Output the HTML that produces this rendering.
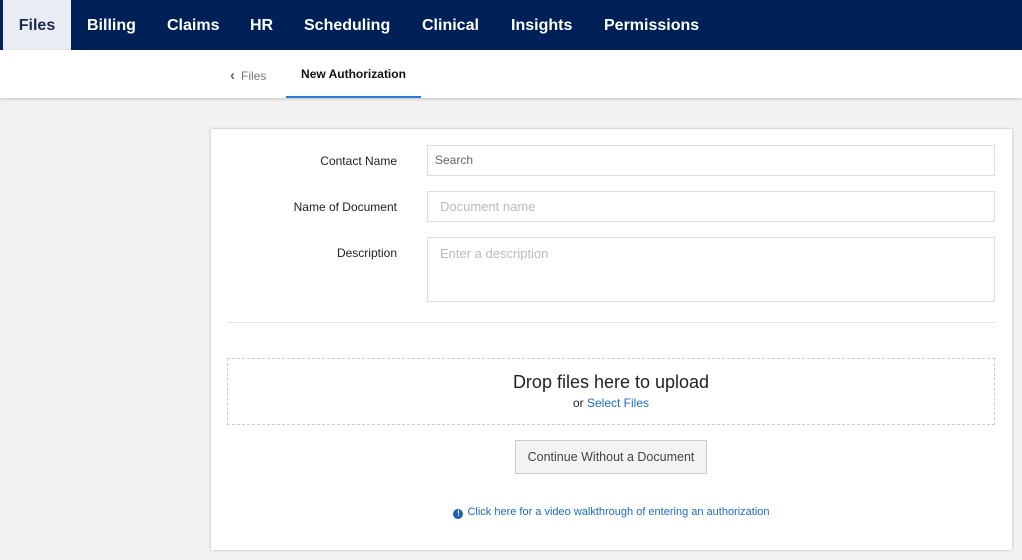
<!DOCTYPE html>
<html><head><style>
*{box-sizing:border-box;margin:0;padding:0}
body{width:1022px;height:560px;background:#f2f2f2;font-family:"Liberation Sans",Arial,sans-serif;position:relative;overflow:hidden}
.nav{position:absolute;left:0;top:0;width:1022px;height:50px;background:#002157}
.nav span{position:absolute;top:0;height:50px;line-height:51px;color:#fff;font-weight:bold;font-size:16px}
.nav .act{left:3px;width:68px;background:#e9ecf3;color:#1b2a4a;text-align:center}
.sub{position:absolute;left:0;top:50px;width:1022px;height:48px;background:#fff;box-shadow:0 1px 3px rgba(0,0,0,.2)}
.sub .back{position:absolute;left:230px;top:17px;font-size:12px;color:#777}
.sub .tab{position:absolute;left:286px;width:135px;top:0;height:48px;border-bottom:2px solid #2a7ad2;text-align:center;line-height:49px;font-size:12px;font-weight:bold;color:#111}
.card{position:absolute;left:211px;top:129px;width:801px;height:421px;background:#fff;box-shadow:0 0 3px rgba(0,0,0,.25)}
.lbl{position:absolute;right:615px;font-size:12px;color:#222;text-align:right;white-space:nowrap}
.in{position:absolute;left:216px;width:568px;border:1px solid #ddd;font-size:13px;color:#bbb;padding-left:12px}
.hr{position:absolute;left:16px;width:768px;top:193px;border-top:1px solid #e5e5e5}
.drop{position:absolute;left:16px;top:229px;width:768px;height:67px;border:1px dashed #ccc;text-align:center}
.btn{position:absolute;left:304px;top:311px;width:192px;height:34px;border:1px solid #ccc;background:#f3f3f3;font-size:12.5px;color:#444;text-align:center;line-height:32px}
.help{position:absolute;left:0;width:801px;top:377px;text-align:center;font-size:11px;color:#1a6bc4}
.help i{display:inline-block;width:10px;height:10px;border-radius:50%;background:#1a5fb4;color:#fff;font-style:normal;font-weight:bold;font-size:8px;line-height:10px;vertical-align:-1px;margin-right:4px}
</style></head><body>
<div class="nav">
<span class="act">Files</span>
<span style="left:87px">Billing</span>
<span style="left:167px">Claims</span>
<span style="left:250px">HR</span>
<span style="left:304px">Scheduling</span>
<span style="left:422px">Clinical</span>
<span style="left:511px">Insights</span>
<span style="left:604px">Permissions</span>
</div>
<div class="sub"><span class="back"><b style="color:#666;margin-right:6px;font-size:15px">&#8249;</b>Files</span><div class="tab">New Authorization</div></div>
<div class="card">
<div class="lbl" style="top:25px">Contact Name</div>
<div class="in" style="top:16px;height:31px;line-height:29px;font-size:12px;color:#666;padding-left:7px">Search</div>
<div class="lbl" style="top:71px">Name of Document</div>
<div class="in" style="top:62px;height:31px;line-height:29px">Document name</div>
<div class="lbl" style="top:117px">Description</div>
<div class="in" style="top:108px;height:65px;padding-top:8px">Enter a description</div>
<div class="hr"></div>
<div class="drop"><div style="font-size:18px;color:#222;margin-top:13px">Drop files here to upload</div><div style="font-size:12px;color:#222;margin-top:3px">or <span style="color:#1a6bc4">Select Files</span></div></div>
<div class="btn">Continue Without a Document</div>
<div class="help"><i>!</i>Click here for a video walkthrough of entering an authorization</div>
</div>
</body></html>
